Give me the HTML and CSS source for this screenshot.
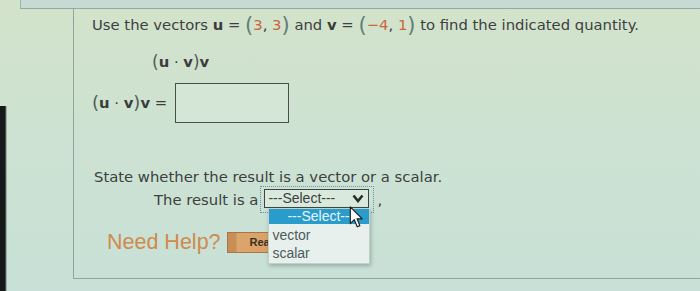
FILE: index.html
```html
<!DOCTYPE html>
<html lang="en">
<head>
    <meta charset="UTF-8">
    <meta name="viewport" content="width=device-width, initial-scale=1.0">
    <title>Vectors: (u · v)v</title>
    <link rel="stylesheet" href="styles.css">
</head>
<body>
    <div class="screen">
        <div class="top-bar"></div>
        <div class="question-box">
            <div class="prompt">
                Use the vectors <b>u</b> = <span class="paren">(</span><span class="num">3</span>, <span class="num">3</span><span class="paren">)</span>
                and <b>v</b> = <span class="paren">(</span><span class="num">&minus;4</span>, <span class="num">1</span><span class="paren">)</span>
                to find the indicated quantity.
            </div>

            <div class="expr"><span class="paren-sm">(</span><b>u</b> &middot; <b>v</b><span class="paren-sm">)</span><b>v</b></div>

            <div class="answer-row">
                <span class="expr-label"><span class="paren-md">(</span><b>u</b> &middot; <b>v</b><span class="paren-md">)</span><b>v</b> =</span>
                <span class="answer-box"></span>
            </div>

            <div class="prompt state">State whether the result is a vector or a scalar.</div>

            <div class="result-row">
                <span>The result is a</span>
                <span class="select-focus">
                    <span class="select">
                        <span class="select-text">---Select---</span>
                        <svg class="chevron" width="12" height="9" viewBox="0 0 12 9">
                            <path d="M1.5 1.5 L6 7 L10.5 1.5" fill="none" stroke="#2b2b2b" stroke-width="2.6"/>
                        </svg>
                    </span>
                    <span class="dropdown">
                        <span class="dropdown-item active">---Select---</span>
                        <span class="dropdown-item">vector</span>
                        <span class="dropdown-item">scalar</span>
                    </span>
                    <svg class="cursor" width="15" height="23" viewBox="0 0 16 26">
                        <path d="M1 1 L1 20 L5.5 15.5 L8.8 23.5 L11.8 22.2 L8.6 14.5 L14.5 14.5 Z" fill="#fafafa" stroke="#1c1c1c" stroke-width="1.3" stroke-linejoin="round"/>
                    </svg>
                </span>
                <span class="comma">,</span>
            </div>

            <div class="help-row">
                <span class="need-help">Need Help?</span>
                <span class="help-btn">Read It</span>
            </div>
        </div>
    </div>
</body>
</html>
```

FILE: styles.css
```css
body {
    margin: 0;
    background: #cde0d0;
}
.screen {
    width: 700px;
    height: 291px;
    overflow: hidden;
    font-family: 'DejaVu Sans', Verdana, sans-serif;
    font-size: 14.8px;
    color: #3d403f;
    background:
        linear-gradient(to right, #15191a 0, #15191a 5px, rgba(0,0,0,0) 7px) no-repeat left bottom / 8px 185px,
        linear-gradient(to bottom, #d3e3cb 0%, #cde2d2 50%, #c8e0d7 100%);
}
.top-bar {
    margin-left: 20px;
    height: 8px;
    background: #c7dbd4;
    border-left: 1px solid #9fb5ac;
    border-bottom: 1px solid #93aaa2;
}
.question-box {
    margin-left: 73px;
    height: 270px;
    box-sizing: border-box;
    border-left: 1px solid #8ea69c;
    border-bottom: 1px solid #8ea69c;
    padding: 6px 0 0 18px;
    position: relative;
}
.prompt {
    line-height: 20px;
    white-space: nowrap;
}
.prompt b, .expr b, .expr-label b {
    color: #3a3d3c;
}
.paren {
    font-size: 21px;
    line-height: 1;
    color: #5f7d79;
    vertical-align: -2px;
}
.paren-sm {
    font-size: 17px;
    line-height: 1;
    color: #4e5c5a;
    vertical-align: -1px;
}
.paren-md {
    font-size: 18px;
    line-height: 1;
    color: #4e5c5a;
    vertical-align: -1px;
}
.num {
    color: #c9663b;
}
.expr {
    margin-top: 16px;
    padding-left: 60px;
    line-height: 20px;
}
.answer-row {
    margin-top: 11px;
    display: flex;
    align-items: center;
    gap: 8px;
}
.answer-box {
    width: 112px;
    height: 38px;
    border: 1px solid #4a4f4d;
    background: #d4e6d6;
}
.state {
    margin-top: 44px;
    padding-left: 2px;
}
.result-row {
    margin-top: -2px;
    padding-left: 62px;
    display: flex;
    align-items: center;
    gap: 2px;
    height: 28px;
}
.select-focus {
    position: relative;
    border: 1px dotted #6f8fa6;
    padding: 2px 4px 4px 4px;
    display: flex;
}
.select {
    width: 97px;
    height: 17px;
    border: 1px solid #3f4442;
    background: #d9e9dc;
    display: flex;
    align-items: center;
    justify-content: space-between;
    padding: 0 3px;
    margin-left: -1px;
}
.select-text {
    font-family: 'Liberation Sans', Arial, sans-serif;
    font-size: 14px;
    color: #3d4140;
}
.chevron {
    margin-right: 1px;
}
.dropdown {
    position: absolute;
    left: 7px;
    top: 21px;
    width: 100px;
    background: #e7f0ed;
    border: 1px solid #c2d0cc;
    box-shadow: 1px 2px 4px rgba(60, 80, 80, 0.35);
    font-family: 'Liberation Sans', Arial, sans-serif;
    font-size: 14px;
    color: #4e5a5a;
    display: flex;
    flex-direction: column;
    padding-bottom: 1px;
    z-index: 2;
}
.dropdown-item {
    height: 18px;
    line-height: 18px;
    padding-left: 3px;
}
.dropdown-item.active {
    background: #2a9ccc;
    color: #e8f6fb;
    text-align: center;
    height: 15px;
    line-height: 15px;
    margin-bottom: 2px;
}
.cursor {
    position: absolute;
    left: 88px;
    top: 19px;
    z-index: 3;
}
.comma {
    margin-left: 1px;
}
.help-row {
    margin-top: 17px;
    padding-left: 15px;
    display: flex;
    align-items: center;
    gap: 6px;
}
.need-help {
    font-family: 'Liberation Sans', Arial, sans-serif;
    font-size: 21.5px;
    color: #cf8b4e;
}
.help-btn {
    height: 19px;
    line-height: 19px;
    padding: 0 10px 0 22px;
    border: 1px solid #a8764a;
    background: linear-gradient(to right, #c98e55 0, #c98e55 8px, #dca56c 9px, #d99f63 100%);
    font-family: 'Liberation Sans', Arial, sans-serif;
    font-size: 11px;
    font-weight: bold;
    color: #3a3124;
}
```
